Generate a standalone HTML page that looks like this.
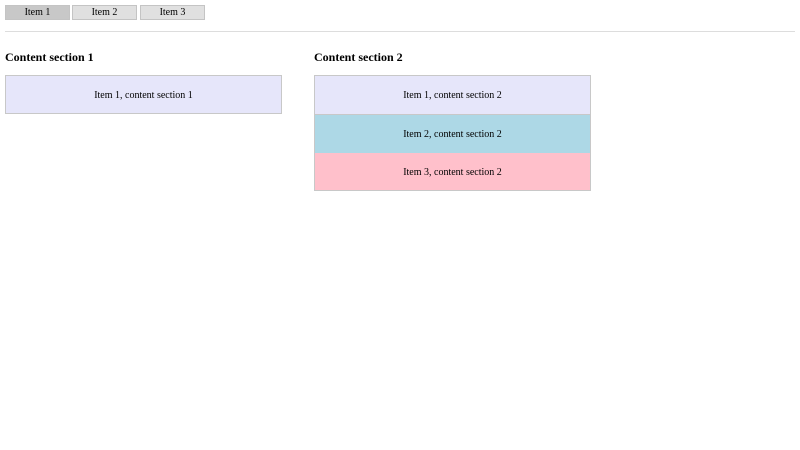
<!DOCTYPE html>
<html><head><style>
body{margin:0;width:800px;height:450px;background:#fff;font-family:"Liberation Serif",serif;color:#000;position:relative;overflow:hidden}
.tab{position:absolute;top:5px;height:13px;width:63px;border:1px solid #c4c4c4;background:#e0e0e0;font-size:10px;line-height:14px;text-align:center}
hr{position:absolute;top:31px;left:5px;width:790px;margin:0;border:0;border-top:1px solid #ddd}
h3{position:absolute;top:50px;margin:0;font-size:12px;font-weight:bold}
.col{position:absolute;top:75px;width:275px;border:1px solid #c8c8c8}
.col div{height:38px;line-height:39px;text-align:center;font-size:10px}
</style></head><body>
<div class="tab" style="left:5px;background:#c8c8c8">Item 1</div>
<div class="tab" style="left:72px">Item 2</div>
<div class="tab" style="left:140px">Item 3</div>
<hr>
<h3 style="left:5px">Content section 1</h3>
<h3 style="left:314px">Content section 2</h3>
<div class="col" style="left:5px"><div style="background:#e6e6fa;height:37px">Item 1, content section 1</div></div>
<div class="col" style="left:314px"><div style="background:#e6e6fa;border-bottom:1px solid #c8c8c8">Item 1, content section 2</div><div style="background:#add8e6">Item 2, content section 2</div><div style="background:#ffc0cb;height:37px">Item 3, content section 2</div></div>
</body></html>
